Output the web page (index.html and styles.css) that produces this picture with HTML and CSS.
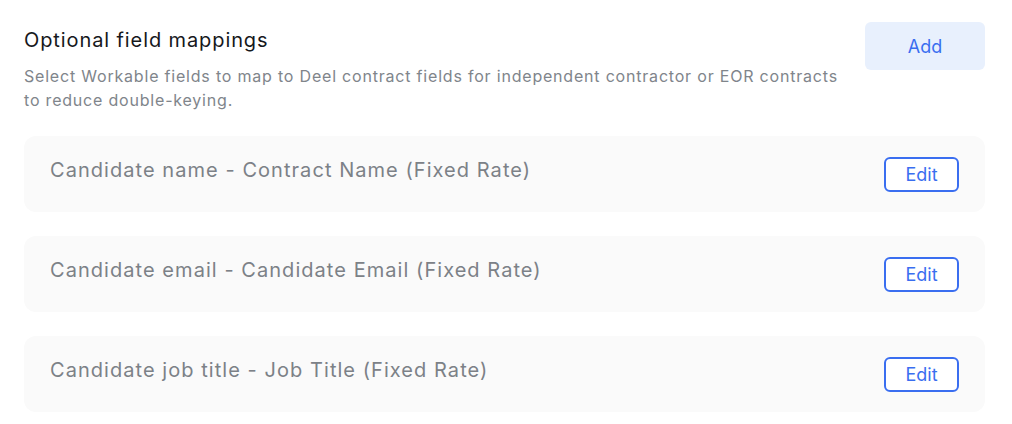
FILE: index.html
```html
<!DOCTYPE html>
<html lang="en">
<head>
<meta charset="utf-8">
<title>Optional field mappings</title>
<link rel="stylesheet" href="styles.css">
</head>
<body>
<main class="page">
  <header class="header">
    <div class="intro">
      <h2 class="title">Optional field mappings</h2>
      <p class="desc">Select Workable fields to map to Deel contract fields for independent contractor or EOR contracts to reduce double-keying.</p>
    </div>
    <button class="btn-add" type="button">Add</button>
  </header>
  <ul class="list">
    <li class="card">
      <span class="card-text">Candidate name - Contract Name (Fixed Rate)</span>
      <button class="btn-edit" type="button">Edit</button>
    </li>
    <li class="card">
      <span class="card-text">Candidate email - Candidate Email (Fixed Rate)</span>
      <button class="btn-edit" type="button">Edit</button>
    </li>
    <li class="card">
      <span class="card-text">Candidate job title - Job Title (Fixed Rate)</span>
      <button class="btn-edit" type="button">Edit</button>
    </li>
  </ul>
</main>
</body>
</html>
```

FILE: styles.css
```css
* { box-sizing: border-box; }
html, body {
  margin: 0;
  padding: 0;
  background: #ffffff;
  font-family: Inter, "Noto Sans", "Liberation Sans", sans-serif;
}
.page {
  width: 1012px;
  padding: 22px 27px 0 24px;
}
.header {
  display: flex;
  align-items: flex-start;
  gap: 16px;
}
.intro {
  flex: 1;
  min-width: 0;
  padding-top: 4px;
}
.title {
  margin: 0;
  font-size: 20px;
  line-height: 28px;
  font-weight: 400;
  letter-spacing: 0.9px;
  color: #16181c;
}
.desc {
  margin: 10px 0 0;
  font-size: 16px;
  line-height: 24px;
  letter-spacing: 0.8px;
  color: #80858b;
}
.btn-add {
  flex: none;
  width: 120px;
  height: 48px;
  border: none;
  border-radius: 6px;
  background: #e8f0fd;
  color: #3a6ef0;
  font-family: inherit;
  font-size: 18px;
  font-weight: 400;
  padding: 0;
}
.list {
  list-style: none;
  margin: 24px 0 0;
  padding: 0;
  display: flex;
  flex-direction: column;
  gap: 24px;
}
.card {
  display: flex;
  align-items: flex-start;
  justify-content: space-between;
  height: 76px;
  padding: 21px 26px 0 26px;
  background: #fafafa;
  border-radius: 12px;
}
.card-text {
  margin-top: -1px;
  font-size: 20px;
  line-height: 28px;
  letter-spacing: 1.05px;
  color: #7c8187;
}
.btn-edit {
  flex: none;
  width: 75px;
  height: 35px;
  border: 2px solid #3a6ef0;
  border-radius: 6px;
  background: #ffffff;
  color: #3a6ef0;
  font-family: inherit;
  font-size: 18px;
  font-weight: 400;
  padding: 0;
}
```
